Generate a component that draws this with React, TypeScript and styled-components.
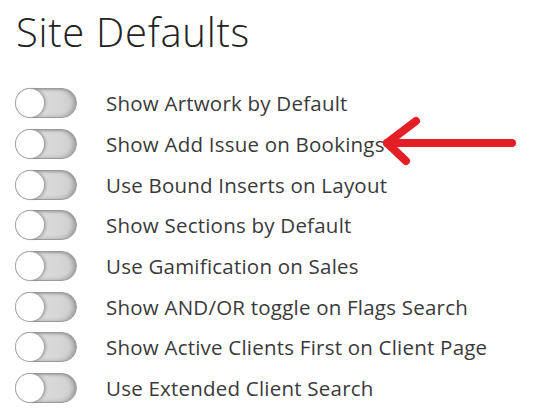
import React, { useState } from 'react'
import styled, { createGlobalStyle } from 'styled-components'

const GlobalStyle = createGlobalStyle`
  html, body {
    margin: 0;
    padding: 0;
    background: #ffffff;
  }
  body {
    font-family: 'Open Sans', 'Noto Sans', sans-serif;
    color: #333333;
  }
`

const Page = styled.div`
  position: relative;
  width: 553px;
  height: 409px;
  overflow: hidden;
  padding: 4px 0 0 15px;
  box-sizing: border-box;
`

const Title = styled.h1`
  margin: 0;
  font-size: 40px;
  font-weight: 300;
  letter-spacing: 0.7px;
  line-height: normal;
  color: #222222;
  padding-left: 1px;
`

const SettingsList = styled.ul`
  list-style: none;
  margin: 24px 0 0;
  padding: 0;
`

const SettingRow = styled.li`
  display: flex;
  align-items: center;
  height: 40.7px;
  gap: 29px;
`

const Track = styled.button<{ on: boolean }>`
  position: relative;
  flex: none;
  width: 62px;
  height: 30px;
  padding: 0;
  border-radius: 15px;
  border: 1px solid #9c9c9c;
  box-sizing: border-box;
  cursor: pointer;
  background: ${({ on }) =>
    on ? 'linear-gradient(to bottom, #6fb3e8, #4a95d4)' : 'linear-gradient(to right, #e6e6e6, #d6d6d6 70%, #cfcfcf)'};
  box-shadow: inset -3px 0 4px rgba(0, 0, 0, 0.22), inset 0 1px 2px rgba(0, 0, 0, 0.15);
`

const Knob = styled.span<{ on: boolean }>`
  position: absolute;
  top: 0px;
  left: ${({ on }) => (on ? '32px' : '0px')};
  width: 28px;
  height: 28px;
  border-radius: 50%;
  background: #ffffff;
  box-shadow: 0 0 0 1px #a8a8a8, 2px 0 3px rgba(0, 0, 0, 0.25);
  transition: left 150ms ease;
`

const Label = styled.span`
  font-size: 20.5px;
  letter-spacing: 0.22px;
  color: #3a3a3a;
  white-space: nowrap;
`

const ArrowMark = styled.svg`
  position: absolute;
  left: 377px;
  top: 112px;
  pointer-events: none;
`

const settings = [
  'Show Artwork by Default',
  'Show Add Issue on Bookings',
  'Use Bound Inserts on Layout',
  'Show Sections by Default',
  'Use Gamification on Sales',
  'Show AND/OR toggle on Flags Search',
  'Show Active Clients First on Client Page',
  'Use Extended Client Search',
]

function Toggle({ label }: { label: string }) {
  const [on, setOn] = useState(false)
  return (
    <SettingRow>
      <Track on={on} role="switch" aria-checked={on} aria-label={label} onClick={() => setOn(!on)}>
        <Knob on={on} />
      </Track>
      <Label>{label}</Label>
    </SettingRow>
  )
}

export default function App() {
  return (
    <Page>
      <GlobalStyle />
      <Title>Site Defaults</Title>
      <SettingsList>
        {settings.map(s => (
          <Toggle key={s} label={s} />
        ))}
      </SettingsList>
      <ArrowMark width="145" height="60" viewBox="0 0 145 60">
        <g stroke="#e31e24" strokeWidth="8" strokeLinecap="round" strokeLinejoin="round" fill="none">
          <path d="M10 31 L135 31" />
          <path d="M39 9 L10 31 L29 49" />
        </g>
      </ArrowMark>
    </Page>
  )
}
